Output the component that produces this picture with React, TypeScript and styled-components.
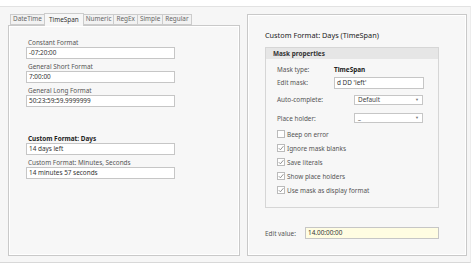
import React from "react";
import styled, { createGlobalStyle } from "styled-components";

const Global = createGlobalStyle`
  html, body { margin: 0; padding: 0; background: #ffffff; }
  body { font-family: "Noto Sans", "Open Sans", sans-serif; color: #444; }
  * { box-sizing: border-box; }
`;

const Page = styled.div`
  width: 474px;
  height: 271px;
  background: #ffffff;
  padding-top: 6px;
  font-size: 6.4px;
`;

const Frame = styled.div`
  height: 257px;
  border-top: 1px solid #e2e2e2;
  border-bottom: 1px solid #d8d8d8;
  border-right: 1px solid #ececec;
  width: 471px;
  background: #f6f6f6;
  display: flex;
  gap: 7px;
  padding: 7px 0 6px 8px;
`;

const LeftCol = styled.div`
  width: 232px;
  display: flex;
  flex-direction: column;
`;

const TabRow = styled.div`
  display: flex;
  align-items: flex-end;
  height: 11px;
  padding-left: 3px;
`;

const Tab = styled.div<{ $active?: boolean }>`
  height: ${(p) => (p.$active ? "13px" : "11px")};
  padding: 0 ${(p) => (p.$active ? "4px" : "2px")};
  margin-bottom: ${(p) => (p.$active ? "-1px" : "0")};
  border: 1px solid #cccccc;
  border-bottom: ${(p) => (p.$active ? "none" : "1px solid #cccccc")};
  margin-left: -1px;
  background: ${(p) => (p.$active ? "#f7f7f7" : "#f2f2f2")};
  display: flex;
  align-items: center;
  line-height: 1;
  color: ${(p) => (p.$active ? "#333" : "#666")};
  position: relative;
  z-index: ${(p) => (p.$active ? 1 : 0)};
`;

const Panel = styled.div`
  flex: 1;
  border: 1px solid #c9c9c9;
  box-shadow: inset 0 0 0 1px #ffffff;
  background: #f7f7f7;
  padding: 12px 0 0 17px;
`;

const Field = styled.div`
  display: flex;
  flex-direction: column;
  margin-bottom: 3px;
`;

const Label = styled.div<{ $bold?: boolean }>`
  height: 9px;
  line-height: 9px;
  padding-left: 2px;
  font-weight: ${(p) => (p.$bold ? 700 : 400)};
  color: ${(p) => (p.$bold ? "#222" : "#555")};
`;

const Input = styled.div<{ $w?: number; $yellow?: boolean }>`
  width: ${(p) => p.$w ?? 149}px;
  height: 12px;
  border: 1px solid #c6c6c6;
  background: ${(p) => (p.$yellow ? "#fffde2" : "#ffffff")};
  line-height: 10px;
  padding-left: 2px;
  color: #333;
  white-space: nowrap;
`;

const Spacer = styled.div<{ $h: number }>`
  height: ${(p) => p.$h}px;
`;

const RightBox = styled.div`
  width: 220px;
  border: 1px solid #c9c9c9;
  box-shadow: inset 0 0 0 1px #ffffff;
  background: #f7f7f7;
  padding: 15px 0 0 17px;
  display: flex;
  flex-direction: column;
`;

const Title = styled.div`
  height: 11px;
  line-height: 11px;
  font-size: 7.3px;
  color: #222;
  margin-bottom: 6px;
`;

const Group = styled.div`
  width: 174px;
  height: 161px;
  border: 1px solid #d6d6d6;
  background: #f7f7f7;
`;

const GroupHead = styled.div`
  height: 11px;
  line-height: 11px;
  background: #e6e6e6;
  font-weight: 700;
  color: #333;
  padding-left: 7px;
`;

const GroupBody = styled.div`
  padding: 3px 0 0 11px;
  display: flex;
  flex-direction: column;
`;

const Row = styled.div<{ $h: number }>`
  display: flex;
  align-items: center;
  height: ${(p) => p.$h}px;
`;

const RowLabel = styled.div<{ $w: number }>`
  width: ${(p) => p.$w}px;
  color: #555;
  flex-shrink: 0;
`;

const Strong = styled.div`
  font-weight: 700;
  color: #222;
`;

const Select = styled.div`
  width: 69px;
  height: 10px;
  border: 1px solid #c6c6c6;
  background: #ffffff;
  line-height: 8px;
  padding-left: 3px;
  display: flex;
  justify-content: space-between;
  color: #444;
`;

const Caret = styled.span`
  font-size: 4px;
  color: #777;
  padding-right: 3px;
  line-height: 8px;
`;

const Check = styled.div`
  display: flex;
  align-items: center;
  gap: 2px;
  height: 14px;
  color: #555;
`;

const Box = styled.div`
  width: 8px;
  height: 8px;
  border: 1px solid #bbbbbb;
  background: #ffffff;
  display: flex;
  align-items: center;
  justify-content: center;
`;

const EditRow = styled.div`
  display: flex;
  align-items: center;
  margin-top: 19px;
`;

function CheckItem({ label, on }: { label: string; on?: boolean }) {
  return (
    <Check>
      <Box>
        {on && (
          <svg width="6" height="6" viewBox="0 0 6 6">
            <path d="M0.8 3.2 L2.4 4.8 L5.4 1.2" stroke="#777" strokeWidth="0.8" fill="none" />
          </svg>
        )}
      </Box>
      {label}
    </Check>
  );
}

export default function App() {
  return (
    <Page>
      <Global />
      <Frame>
        <LeftCol>
          <TabRow>
            <Tab>DateTime</Tab>
            <Tab $active>TimeSpan</Tab>
            <Tab>Numeric</Tab>
            <Tab>RegEx</Tab>
            <Tab>Simple</Tab>
            <Tab>Regular</Tab>
          </TabRow>
          <Panel>
            <Field>
              <Label>Constant Format</Label>
              <Input>-07:20:00</Input>
            </Field>
            <Field>
              <Label>General Short Format</Label>
              <Input>7:00:00</Input>
            </Field>
            <Field>
              <Label>General Long Format</Label>
              <Input>50:23:59:59.9999999</Input>
            </Field>
            <Spacer $h={24} />
            <Field>
              <Label $bold>Custom Format: Days</Label>
              <Input>14 days left</Input>
            </Field>
            <Field>
              <Label>Custom Format: Minutes, Seconds</Label>
              <Input>14 minutes 57 seconds</Input>
            </Field>
          </Panel>
        </LeftCol>
        <RightBox>
          <Title>Custom Format: Days (TimeSpan)</Title>
          <Group>
            <GroupHead>Mask properties</GroupHead>
            <GroupBody>
              <Row $h={14}>
                <RowLabel $w={57}>Mask type:</RowLabel>
                <Strong>TimeSpan</Strong>
              </Row>
              <Row $h={13}>
                <RowLabel $w={57}>Edit mask:</RowLabel>
                <Input $w={90}>d DD 'left'</Input>
              </Row>
              <Row $h={21}>
                <RowLabel $w={77}>Auto-complete:</RowLabel>
                <Select>
                  Default<Caret>▼</Caret>
                </Select>
              </Row>
              <Row $h={16}>
                <RowLabel $w={77}>Place holder:</RowLabel>
                <Select>
                  _<Caret>▼</Caret>
                </Select>
              </Row>
              <Spacer $h={1} />
              <CheckItem label="Beep on error" />
              <CheckItem label="Ignore mask blanks" on />
              <CheckItem label="Save literals" on />
              <CheckItem label="Show place holders" on />
              <CheckItem label="Use mask as display format" on />
            </GroupBody>
          </Group>
          <EditRow>
            <RowLabel $w={40}>Edit value:</RowLabel>
            <Input $w={134} $yellow>14.00:00:00</Input>
          </EditRow>
        </RightBox>
      </Frame>
    </Page>
  );
}
